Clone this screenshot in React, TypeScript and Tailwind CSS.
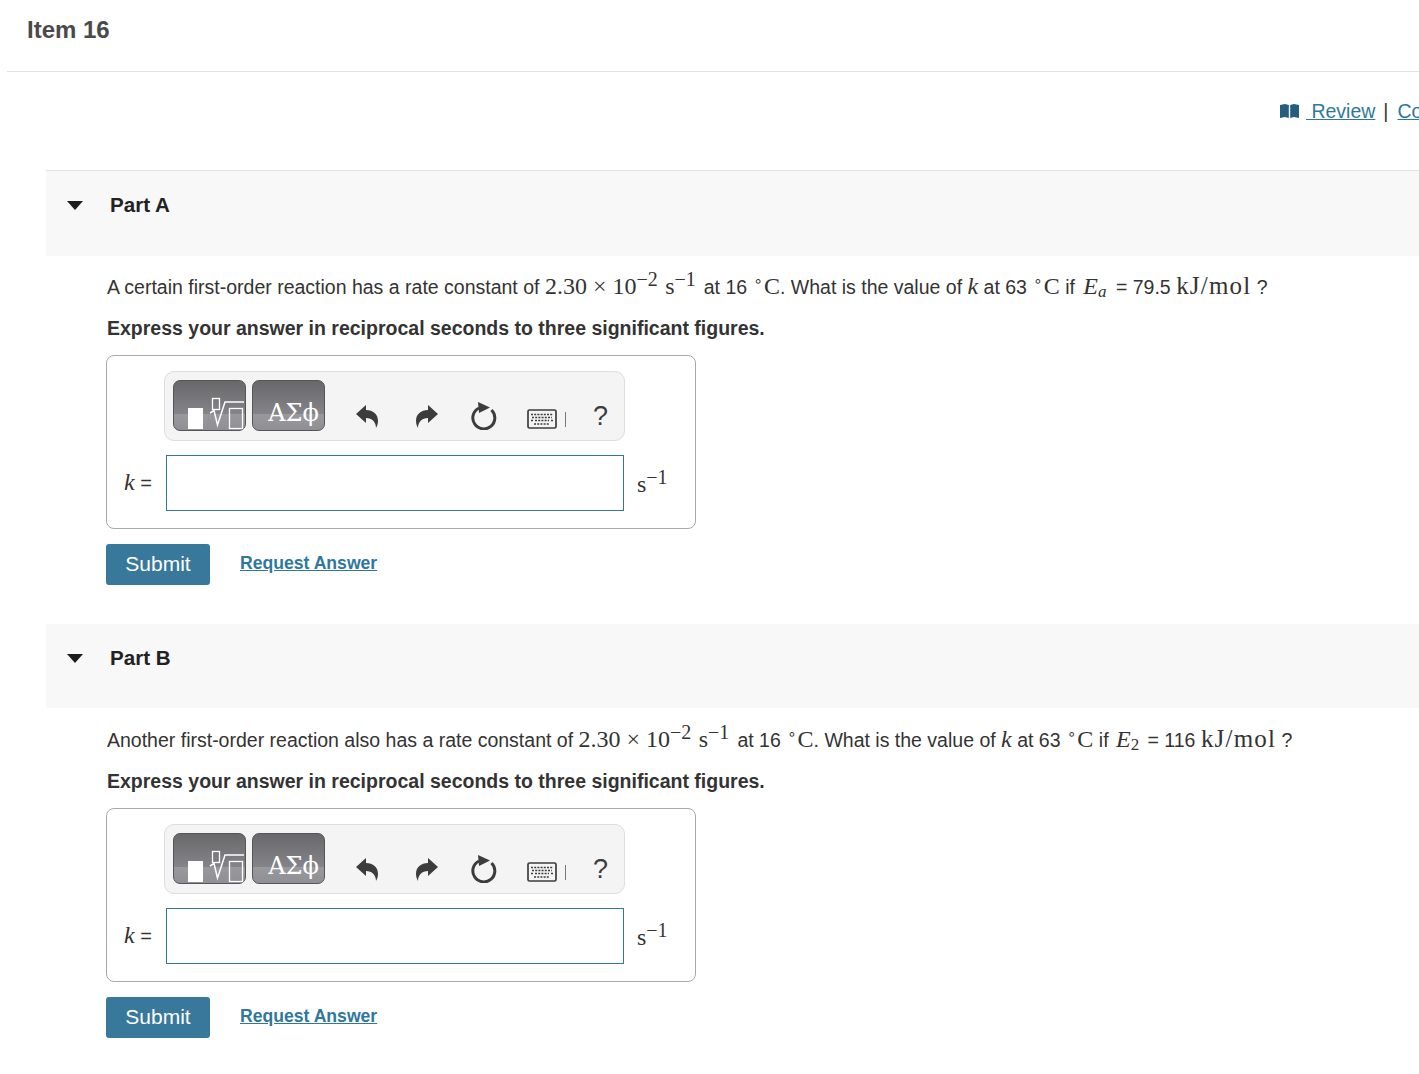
import type { ReactNode } from 'react';

function Num({ children }: { children: ReactNode }) {
  return <span className="font-['Liberation_Serif',serif] text-[24px]">{children}</span>;
}

function Sup({ children }: { children: ReactNode }) {
  return <span className="relative -top-[8px] font-['Liberation_Serif',serif] text-[20px] leading-none">{children}</span>;
}

function Deg() {
  return <span className="relative -top-[8px] mx-[1px] font-['DejaVu_Sans',sans-serif] text-[15px] leading-none">∘</span>;
}

function Var({ children }: { children: ReactNode }) {
  return <i className="font-['Liberation_Serif',serif] text-[24px]">{children}</i>;
}

function Unit() {
  return <span className="font-['Liberation_Serif',serif] text-[25px] tracking-[1.2px]">kJ/mol</span>;
}

function TemplateButton() {
  return (
    <div className="h-[51px] w-[73px] rounded-[7px] border border-[#55555a] bg-[linear-gradient(#68686b_0%,#858589_68%,#98989d_68%,#8f8f94_100%)]">
      <svg width="71" height="49" viewBox="0 0 71 49" fill="none">
        <rect x="14" y="27" width="15" height="21" fill="#ffffff" />
        <rect x="38.5" y="17.5" width="7" height="11" stroke="#ffffff" strokeWidth="1.3" />
        <path d="M36 32 L40 29.5 L43.5 44 L51 21 H70" stroke="#ffffff" strokeWidth="1.5" />
        <rect x="55.5" y="27.5" width="13" height="20" stroke="#ffffff" strokeWidth="1.3" />
      </svg>
    </div>
  );
}

function SymbolButton() {
  return (
    <div className="flex h-[51px] w-[73px] items-center justify-center rounded-[7px] border border-[#55555a] bg-[linear-gradient(#68686b_0%,#858589_68%,#98989d_68%,#8f8f94_100%)] pl-[10px] pt-[14px] font-['DejaVu_Serif',serif] text-[24px] leading-[32px] text-white">
      ΑΣϕ
    </div>
  );
}

function UndoIcon() {
  return (
    <svg width="22" height="24" viewBox="0 0 22 24">
      <path d="M0 10 L10 1 V6 C17 6 22 10 22 17 C22 20 21 22 20 24 C20 18 16 14 10 14 V19 Z" fill="#3c3c3c" />
    </svg>
  );
}

function RedoIcon() {
  return (
    <svg width="22" height="24" viewBox="0 0 22 24">
      <path d="M22 10 L12 1 V6 C5 6 0 10 0 17 C0 20 1 22 2 24 C2 18 6 14 12 14 V19 Z" fill="#3c3c3c" />
    </svg>
  );
}

function ResetIcon() {
  return (
    <svg width="26" height="28" viewBox="0 0 26 28" fill="none">
      <path d="M8 6 A11 11 0 1 0 20.5 8" stroke="#3c3c3c" strokeWidth="3" />
      <path d="M7 0 L19 5.5 L8 11 Z" fill="#3c3c3c" />
    </svg>
  );
}

function KeyboardIcon() {
  return (
    <svg width="30" height="20" viewBox="0 0 30 20" fill="none">
      <rect x="1" y="1" width="28" height="18" rx="1.5" stroke="#3c3c3c" strokeWidth="1.7" />
      <path d="M4 5.5 H26 M5 8.5 H25 M4 11.5 H6 M8 11.5 H22 M24 11.5 H26 M7 15 H23" stroke="#3c3c3c" strokeWidth="1.7" strokeDasharray="2 1.2" />
    </svg>
  );
}

function AnswerBox() {
  return (
    <div className="relative h-[174px] w-[590px] rounded-[8px] border border-[#a9a9a9] pl-[57px] pt-[15px]">
      <div className="flex h-[70px] w-[461px] items-center rounded-[10px] border border-[#dddddd] bg-[#f4f4f4] pl-[8px] text-[#3c3c3c]">
        <div className="-mt-[1px] flex gap-[6px]">
          <TemplateButton />
          <SymbolButton />
        </div>
        <div className="ml-[31px] mt-[19px]">
          <UndoIcon />
        </div>
        <div className="ml-[38px] mt-[19px]">
          <RedoIcon />
        </div>
        <div className="ml-[33px] mt-[19px]">
          <ResetIcon />
        </div>
        <div className="ml-[30px] mt-[26px]">
          <KeyboardIcon />
        </div>
        <div className="ml-[8px] mt-[26px] h-[15px] w-px bg-[#777777]" />
        <span className="ml-[27px] mt-[20px] font-['Liberation_Sans',sans-serif] text-[27px] leading-[32px]">?</span>
      </div>
      <div className="mt-[14px] flex items-start">
        <span className="absolute left-[17px] top-[108px] font-['Liberation_Sans',sans-serif] text-[20px] text-[#333333]">
          <Var>k</Var> =
        </span>
        <input className="ml-[2px] h-[56px] w-[458px] border border-[#33789c] bg-white" />
        <span className="ml-[13px] mt-[11px] text-[#333333]">
          <Num>s</Num>
          <Sup>−1</Sup>
        </span>
      </div>
    </div>
  );
}

function Part({ name, prompt, short }: { name: string; prompt: ReactNode; short?: boolean }) {
  return (
    <section>
      <div className={short ? 'ml-[46px] flex h-[84px] items-start bg-[#f8f8f8] pt-[19px]' : 'ml-[46px] flex h-[85px] items-start bg-[#f8f8f8] pt-[19px]'}>
        <div className="ml-[21px] mt-[11px] h-0 w-0 border-x-[8px] border-t-[9px] border-x-transparent border-t-[#1c1c1c]" />
        <h2 className="ml-[27px] text-[20.6px] font-bold text-[#222222]">{name}</h2>
      </div>
      <div className={short ? 'pl-[107px] pt-[14px]' : 'pl-[107px] pt-[13px]'}>
        <p className="h-[34px] whitespace-nowrap text-[19.5px] leading-[34px] text-[#333333]">{prompt}</p>
        <p className="mt-[11px] h-[28px] text-[19.5px] font-bold leading-[28px] text-[#333333]">
          Express your answer in reciprocal seconds to three significant figures.
        </p>
        <div className="-ml-px mt-[13px]">
          <AnswerBox />
        </div>
        <div className="-ml-px mt-[15px] flex items-start">
          <button className="h-[41px] w-[104px] rounded-[3px] bg-[#37789b] pb-[2px] text-[21px] text-white">Submit</button>
          <a href="#" className="ml-[30px] mt-[6px] text-[17.6px] font-bold text-[#2f789d] underline">
            Request Answer
          </a>
        </div>
      </div>
    </section>
  );
}

export default function App() {
  return (
    <div className="h-[1074px] w-[1419px] overflow-hidden bg-white font-['Liberation_Sans',sans-serif]">
      <header className="ml-[7px] flex h-[72px] items-start border-b border-[#e2e2e2] pl-[20px] pt-[12px]">
        <h1 className="text-[24px] font-bold text-[#4a4a4a]">Item 16</h1>
      </header>

      <div className="flex h-[98px] items-start whitespace-nowrap pl-[1279px] pt-[25px] text-[19.5px] text-[#2f789d]">
        <svg width="21" height="16" viewBox="0 0 21 16" className="mt-[6px] shrink-0">
          <path d="M1 2 L6 1 L9.8 2 V15 L6 14 L1 15 Z M11.2 2 L15 1 L20 2 V15 L15 14 L11.2 15 Z" fill="#235f7e" />
        </svg>
        <a href="#" className="ml-[6px] shrink-0 whitespace-pre underline"> Review</a>
        <span className="ml-[8px] mr-[9px] shrink-0 text-[#333333]">|</span>
        <a href="#" className="shrink-0 underline">Course Home</a>
      </div>

      <div className="ml-[46px] h-px bg-[#e2e2e2]" />
      <Part
        name="Part A"
        prompt={
          <>
            A certain first-order reaction has a rate constant of <Num>2.30 × 10</Num>
            <Sup>−2</Sup> <span className="ml-[2px]"><Num>s</Num></span>
            <Sup>−1</Sup>
            <span className="ml-[8px]">at 16</span> <Deg />
            <Num>C</Num>. What is the value of <Var>k</Var> at 63 <Deg />
            <Num>C</Num> if <span className="ml-[3px]"><Var>E</Var></span>
            <span className="relative top-[3px] mr-[4px] font-['Liberation_Serif',serif] text-[17px] italic">a</span> = 79.5 <Unit /> ?
          </>
        }
      />

      <div className="mt-[39px]">
        <Part
          short
          name="Part B"
          prompt={
            <>
              Another first-order reaction also has a rate constant of <Num>2.30 × 10</Num>
              <Sup>−2</Sup> <span className="ml-[2px]"><Num>s</Num></span>
              <Sup>−1</Sup>
              <span className="ml-[8px]">at 16</span> <Deg />
              <Num>C</Num>. What is the value of <Var>k</Var> at 63 <Deg />
              <Num>C</Num> if <span className="ml-[2px]"><Var>E</Var></span>
              <span className="relative top-[3px] mr-[3px] font-['Liberation_Serif',serif] text-[17px]">2</span> = 116 <Unit /> ?
            </>
          }
        />
      </div>
    </div>
  );
}
